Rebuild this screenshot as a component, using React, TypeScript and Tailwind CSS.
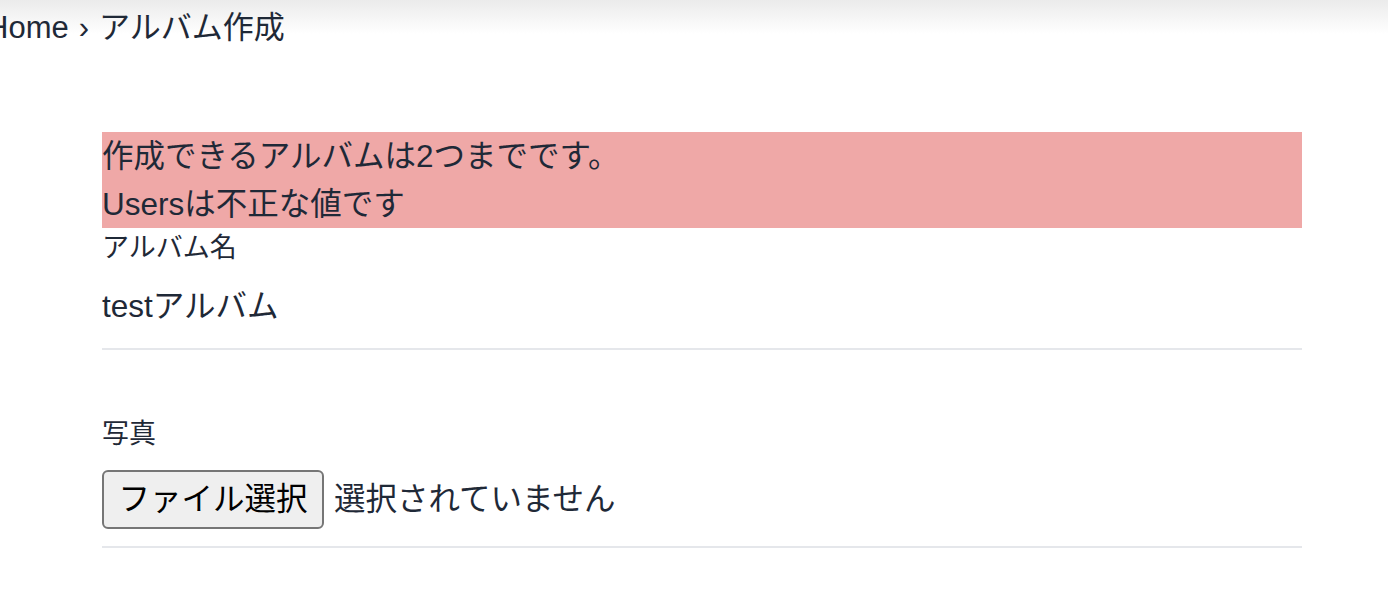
const font = "font-['Liberation_Sans','Noto_Sans_CJK_JP',sans-serif]";

export default function App() {
  return (
    <div className={`min-h-[616px] w-full overflow-hidden bg-white text-[#1f2937] ${font}`}>
      {/* breadcrumb */}
      <div className="h-[52px] bg-[linear-gradient(180deg,#ebebeb_0px,#ffffff_34px)] pt-[4px]">
        <nav className="ml-[-14px] flex items-center gap-[10px] text-[31px] leading-[48px] whitespace-nowrap">
          <span>Home</span>
          <span>›</span>
          <span>アルバム作成</span>
        </nav>
      </div>

      <main className="ml-[102px] mt-[80px] w-[1200px]">
        <div className="bg-[#efa8a7] text-[31.5px] leading-[48px]">
          <p>作成できるアルバムは2つまでです。</p>
          <p>Usersは不正な値です</p>
        </div>

        <label className="block text-[27px] leading-[40px]">アルバム名</label>
        <div className="flex h-[82px] items-center border-b-2 border-[#e5e7eb] pb-[2px] text-[31.5px]">
          testアルバム
        </div>

        <label className="mt-[64px] block text-[27px] leading-[40px]">写真</label>
        <div className="flex items-center gap-[10px] border-b-2 border-[#e5e7eb] pt-[16px] pb-[17px] text-[31.5px]">
          <button className="h-[59px] w-[222px] rounded-[6px] border-2 border-[#767676] bg-[#efefef] text-black">
            ファイル選択
          </button>
          <span>選択されていません</span>
        </div>
      </main>
    </div>
  );
}
